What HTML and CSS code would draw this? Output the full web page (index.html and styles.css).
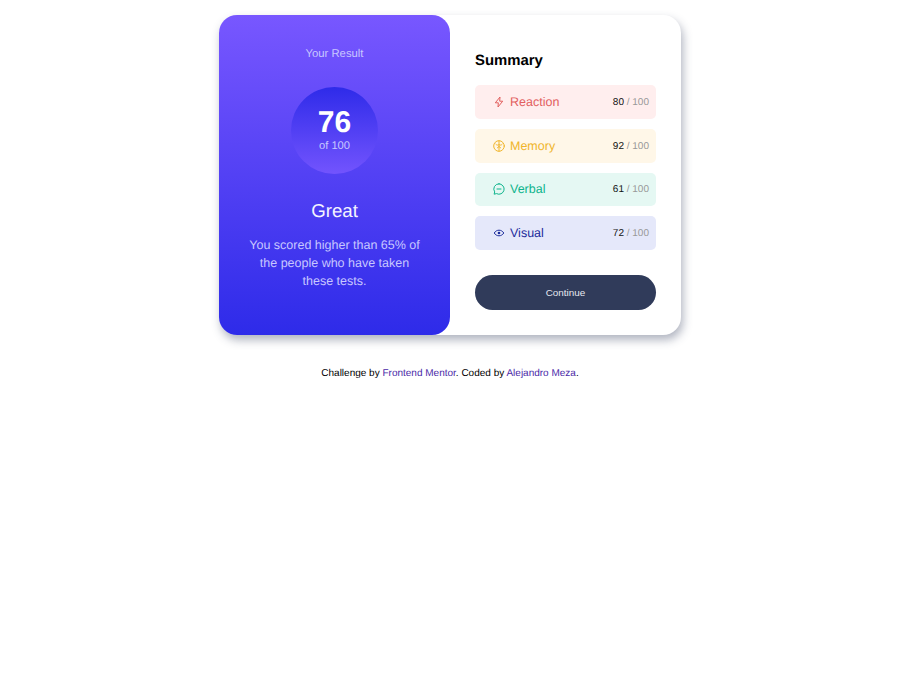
FILE: index.html
```html
<!DOCTYPE html>
<html lang="en">
<head>
    <meta charset="UTF-8">
    <meta name="viewport" content="width=device-width, initial-scale=1.0">
    <title>Results summary</title>
    <link rel="stylesheet" href="styles.css">
</head>
<body>

    <main class="card">
        <section class="result">
            <h2 class="result-title">Your Result</h2>
            <div class="score-circle">
                <span class="score-value">76</span>
                <span class="score-total">of 100</span>
            </div>
            <p class="result-grade">Great</p>
            <p class="result-text">You scored higher than 65% of the people who have taken these tests.</p>
        </section>

        <section class="summary">
            <h2 class="summary-title">Summary</h2>
            <div class="summary-list">
                <div class="row row-reaction">
                    <svg class="row-icon" viewBox="0 0 12 12" fill="none" stroke="currentColor" stroke-width="1" stroke-linejoin="round"><path d="M7 1 2.300 6.800H5.300L5 11 9.700 5.200H6.700L7 1Z"/></svg>
                    <span class="row-label">Reaction</span>
                    <span class="row-score"><b>80</b> / 100</span>
                </div>
                <div class="row row-memory">
                    <svg class="row-icon" viewBox="0 0 12 12" fill="none" stroke="currentColor" stroke-width="1" stroke-linecap="round"><circle cx="6" cy="6" r="5.300"/><path d="M6 1v10M2.800 4.200C3.800 5.400 5 5.400 6 4.400c1 1 2.200 1 3.200-.2M6 6.500 4.400 7.800M6 6.500l1.600 1.300"/></svg>
                    <span class="row-label">Memory</span>
                    <span class="row-score"><b>92</b> / 100</span>
                </div>
                <div class="row row-verbal">
                    <svg class="row-icon" viewBox="0 0 12 12" fill="none" stroke="currentColor" stroke-width="1" stroke-linecap="round" stroke-linejoin="round"><path d="M6 .8a5.200 5.200 0 1 1-2.500 9.800l-2.400.6.600-2.300A5.200 5.200 0 0 1 6 .8Z"/><path d="M4 6h4"/></svg>
                    <span class="row-label">Verbal</span>
                    <span class="row-score"><b>61</b> / 100</span>
                </div>
                <div class="row row-visual">
                    <svg class="row-icon" viewBox="0 0 12 12" fill="none" stroke="currentColor" stroke-width="1"><path d="M1.200 6C2.400 4.200 4 3.200 6 3.200S9.600 4.200 10.800 6C9.600 7.800 8 8.800 6 8.800S2.400 7.800 1.200 6Z"/><circle cx="6" cy="6" r="1.300" fill="currentColor" stroke="none"/></svg>
                    <span class="row-label">Visual</span>
                    <span class="row-score"><b>72</b> / 100</span>
                </div>
            </div>
            <button class="continue-btn">Continue</button>
        </section>
    </main>

    <footer class="attribution">
        Challenge by <a href="#">Frontend Mentor</a>. Coded by <a href="#">Alejandro Meza</a>.
    </footer>

</body>
</html>
```

FILE: styles.css
```css
* {
    box-sizing: border-box;
}
body {
    margin: 0;
    padding-top: 15px;
    background: #fff;
    color: #000;
    font-family: "Liberation Sans", Arial, sans-serif;
    text-rendering: geometricPrecision;
}
.card {
    display: flex;
    width: 462px;
    height: 320px;
    margin: 0 auto;
    background: #fff;
    border-radius: 18px;
    box-shadow: 2px 5px 10px rgba(48, 58, 90, 0.38);
}
.result {
    display: flex;
    flex-direction: column;
    align-items: center;
    width: 231px;
    padding-top: 32px;
    background: linear-gradient(to bottom, #7857ff, #2e2be9);
    border-radius: 18px;
    text-align: center;
}
.result-title {
    margin: 0;
    height: 14px;
    font-size: 11.300px;
    line-height: 14px;
    font-weight: 400;
    color: #c8c7ff;
}
.score-circle {
    display: flex;
    flex-direction: column;
    align-items: center;
    justify-content: center;
    width: 87px;
    height: 87px;
    margin-top: 26px;
    padding-bottom: 1px;
    border-radius: 50%;
    background: linear-gradient(to bottom, #2e2be9, rgba(120, 87, 255, 0.85));
}
.score-value {
    font-size: 30px;
    line-height: 32px;
    font-weight: 700;
    color: #fff;
}
.score-total {
    font-size: 11.200px;
    line-height: 14px;
    color: #c8c7ff;
}
.result-grade {
    margin: 25px 0 0;
    font-size: 18.700px;
    line-height: 24px;
    color: #f4f4ff;
}
.result-text {
    width: 178px;
    margin: 13px 0 0;
    font-size: 12.500px;
    line-height: 18px;
    color: #c8c7ff;
}
.summary {
    flex: 1;
    display: flex;
    flex-direction: column;
    padding: 36px 25px 25px;
}
.summary-title {
    margin: 0;
    font-size: 14.900px;
    line-height: 20px;
    font-weight: 700;
}
.summary-list {
    display: flex;
    flex-direction: column;
    gap: 10px;
    margin-top: 14px;
}
.row {
    display: flex;
    align-items: center;
    height: 33.800px;
    padding: 0 7px 0 18px;
    border-radius: 5px;
}
.row-icon {
    width: 12px;
    height: 12px;
    margin-right: 5px;
    flex-shrink: 0;
}
.row-label {
    font-size: 12.500px;
}
.row-score {
    margin-left: auto;
    padding-top: 1px;
    font-size: 10px;
    color: #999;
}
.row-score b {
    font-weight: 400;
    color: #111;
}
.row-reaction {
    background: #ffeeee;
    color: #e2605f;
}
.row-memory {
    background: #fff7e8;
    color: #f0b52b;
}
.row-verbal {
    background: #e5f8f3;
    color: #0eb48c;
}
.row-visual {
    background: #e5e8fa;
    color: #1c2c9c;
}
.continue-btn {
    height: 35px;
    margin-top: auto;
    border: 0;
    border-radius: 17.500px;
    background: #303b5a;
    color: #e6e8f0;
    font-family: inherit;
    font-size: 9.900px;
}
.attribution {
    margin-top: 32px;
    text-align: center;
    font-size: 10px;
    line-height: 13px;
    color: #000;
}
.attribution a {
    color: #4b2aa8;
    text-decoration: none;
}
```
